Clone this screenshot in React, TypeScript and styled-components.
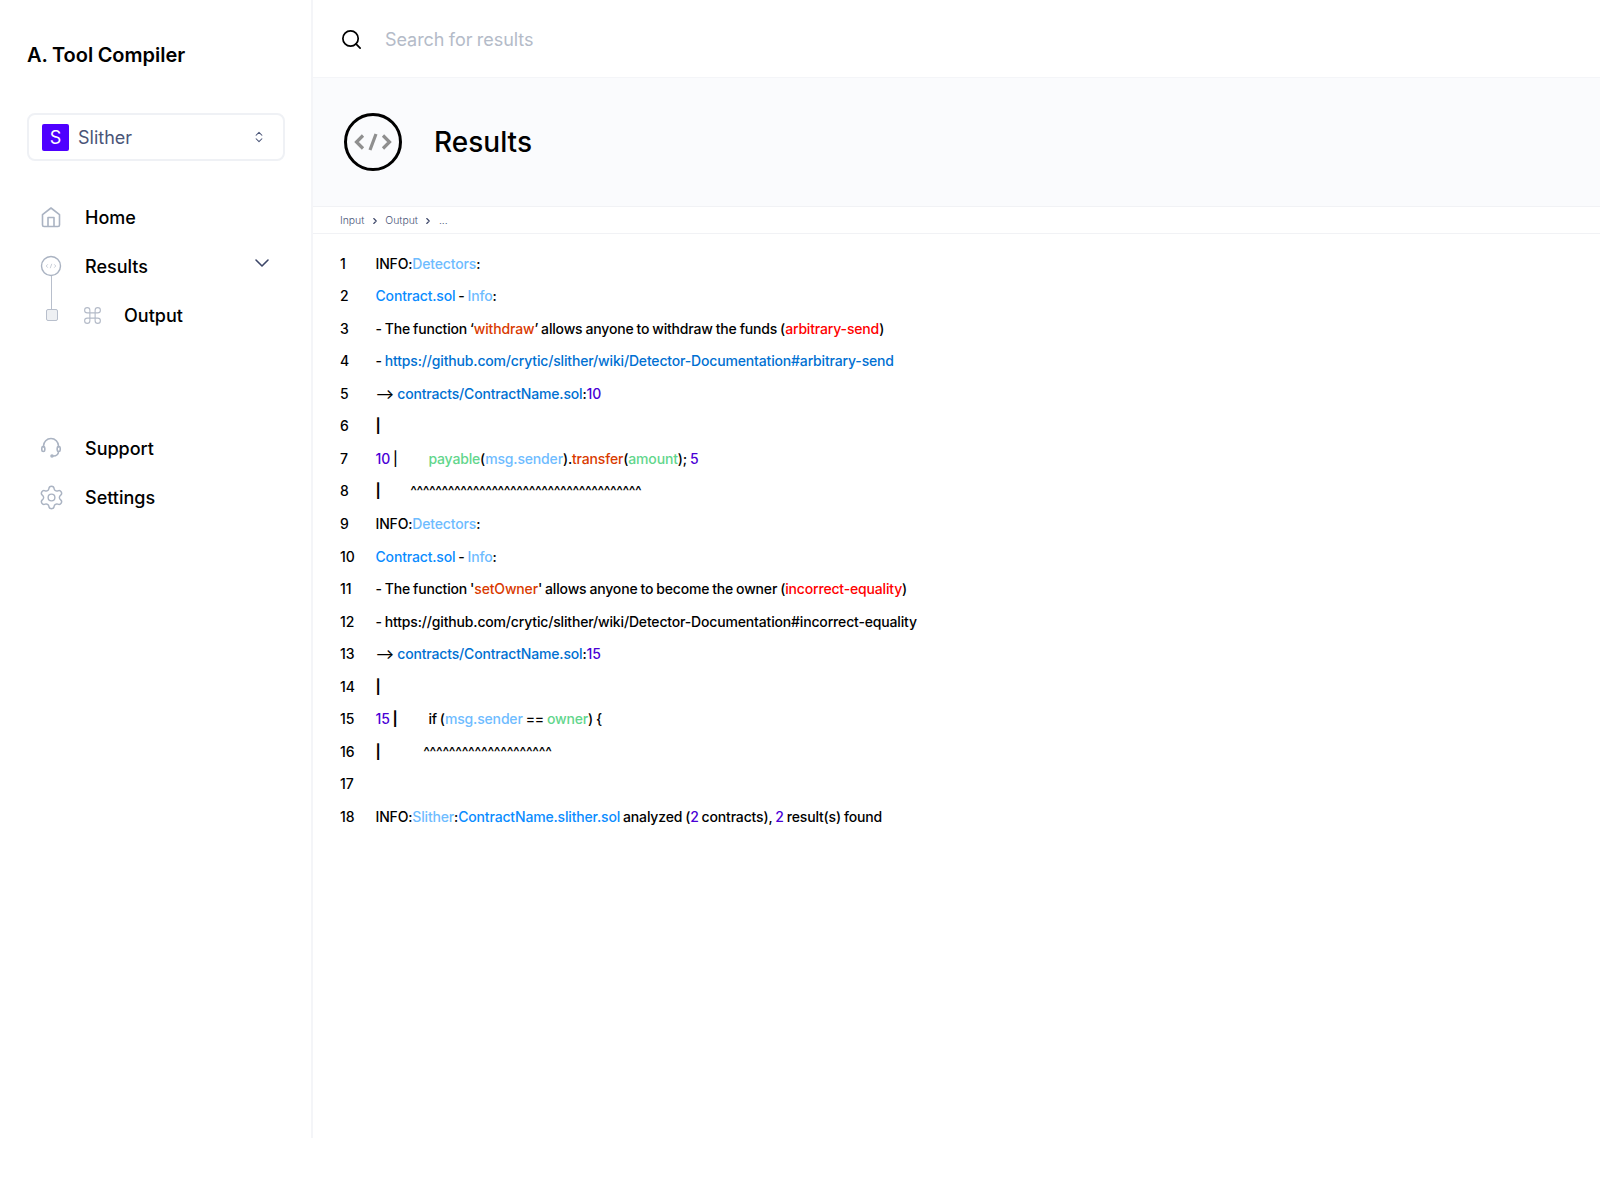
import React from "react";
import styled, { createGlobalStyle } from "styled-components";
import { ChevronDown, ChevronRight, ChevronsUpDown, Command, Search, Settings } from "lucide-react";

const BLACK = "#000000";
const SKY = "#6ebcff";
const BLUE = "#0a8cff";
const LINK = "#0070d2";
const RED = "#ff0000";
const ORANGE = "#d93a00";
const PURPLE = "#4a00d6";
const GREEN = "#62d68c";

type Token = [string, string?];

const CARETS_LONG = "^".repeat(37);
const CARETS_SHORT = "^".repeat(20);

const LINES: Token[][] = [
  [["INFO:"], ["Detectors", SKY], [":"]],
  [["Contract.sol", BLUE], [" - "], ["Info", SKY], [":"]],
  [["- The function ‘"], ["withdraw", ORANGE], ["’ allows anyone to withdraw the funds ("], ["arbitrary-send", RED], [")"]],
  [["- "], ["https://github.com/crytic/slither/wiki/Detector-Documentation#arbitrary-send", LINK]],
  [["-->"], [" "], ["contracts/ContractName.sol", LINK], [":"], ["10", PURPLE]],
  [["|"]],
  [["10 ", PURPLE], ["|          \u200a"], ["payable", GREEN], ["("], ["msg.sender", SKY], [")."], ["transfer", ORANGE], ["("], ["amount", GREEN], ["); "], ["5", PURPLE]],
  [["|"], ["          "], [CARETS_LONG]],
  [["INFO:"], ["Detectors", SKY], [":"]],
  [["Contract.sol", BLUE], [" - "], ["Info", SKY], [":"]],
  [["- The function '"], ["setOwner", ORANGE], ["' allows anyone to become the owner ("], ["incorrect-equality", RED], [")"]],
  [["- https://github.com/crytic/slither/wiki/Detector-Documentation#incorrect-equality"]],
  [["-->"], [" "], ["contracts/ContractName.sol", LINK], [":"], ["15", PURPLE]],
  [["|"]],
  [["15 ", PURPLE], ["|"], ["          \u200a"], ["if ("], ["msg.sender", SKY], [" == "], ["owner", GREEN], [") {"]],
  [["|"], ["              \u200a"], [CARETS_SHORT]],
  [],
  [["INFO:"], ["Slither", SKY], [":"], ["ContractName.slither.sol", BLUE], [" analyzed ("], ["2", PURPLE], [" contracts), "], ["2", PURPLE], [" result(s) found"]],
];

const HomeIcon = () => (
  <svg width="22" height="22" viewBox="0 0 22 22" fill="none" stroke="#aab3c2" strokeWidth="1.6" strokeLinejoin="round">
    <path d="M2.500 8.600 11 2l8.500 6.600V19a1.500 1.500 0 0 1-1.500 1.500H4A1.500 1.500 0 0 1 2.500 19z" />
    <path d="M8 20.500V11.500h6v9" />
  </svg>
);

const HeadsetIcon = () => (
  <svg width="22" height="22" viewBox="0 0 22 22" fill="none" stroke="#aab3c2" strokeWidth="1.6" strokeLinecap="round">
    <path d="M3.500 10V9a7.500 7.500 0 0 1 15 0v1" />
    <rect x="1.800" y="9.500" width="3" height="5" rx="1.500" />
    <rect x="17.200" y="9.500" width="3" height="5" rx="1.500" />
    <path d="M18.500 14.500c0 2.500-2 4.500-5 4.500" />
    <circle cx="12" cy="19" r="1" />
  </svg>
);

const SmallCodeIcon = () => (
  <svg width="22" height="22" viewBox="0 0 22 22" fill="none">
    <circle cx="11" cy="11" r="9.500" fill="#fff" stroke="#aab3c2" strokeWidth="1.400" />
    <path d="M7.800 9.300 6.200 11l1.600 1.700M14.200 9.300l1.600 1.700-1.600 1.700M11.800 8.800l-1.600 4.400" stroke="#c3c9d4" strokeWidth=".9" />
  </svg>
);

const ResultsIcon = () => (
  <svg width="60" height="60" viewBox="0 0 60 60" fill="none">
    <circle cx="30" cy="30" r="27.500" stroke="#000" strokeWidth="3" />
    <path d="M20 23.500 13.500 30l6.500 6.500M40 23.500 46.500 30 40 36.500M33 22l-6 16" stroke="#8f8f8f" strokeWidth="3.200" />
  </svg>
);

const renderToken = ([text, color]: Token, key: number) => {
  if (text === "-->") return <Arrow key={key}>{text}</Arrow>;
  if (text === "|") return <Bar key={key}>{text}</Bar>;
  if (text === CARETS_LONG) return <Carets key={key} $tracking={-0.43}>{text}</Carets>;
  if (text === CARETS_SHORT) return <Carets key={key} $tracking={-0.25}>{text}</Carets>;
  return <Tok key={key} $color={color ?? BLACK}>{text}</Tok>;
};

const App = () => {
  return (
    <Page>
      <GlobalStyle />
      <Sidebar>
        <Brand>A. Tool Compiler</Brand>
        <Picker>
          <PickerBadge>S</PickerBadge>
          <PickerName>Slither</PickerName>
          <ChevronsUpDown size={14} color="#4a5578" strokeWidth={1.8} />
        </Picker>
        <Nav>
          <NavItem>
            <NavIcon><HomeIcon /></NavIcon>
            <NavLabel>Home</NavLabel>
          </NavItem>
          <NavItem>
            <NavIcon $connector><SmallCodeIcon /></NavIcon>
            <NavLabel>Results</NavLabel>
            <NavChevron><ChevronDown size={24} color="#3c4668" strokeWidth={1.6} /></NavChevron>
          </NavItem>
          <NavItem>
            <NavIcon><SubMarker /></NavIcon>
            <SubIcon><Command size={21} color="#b4bbc8" strokeWidth={1.3} /></SubIcon>
            <NavLabel>Output</NavLabel>
          </NavItem>
        </Nav>
        <FooterNav>
          <NavItem>
            <NavIcon><HeadsetIcon /></NavIcon>
            <NavLabel>Support</NavLabel>
          </NavItem>
          <NavItem>
            <NavIcon><Settings size={27} color="#aab3c2" strokeWidth={1.25} /></NavIcon>
            <NavLabel>Settings</NavLabel>
          </NavItem>
        </FooterNav>
      </Sidebar>
      <Main>
        <SearchBar>
          <Search size={23} color="#000" strokeWidth={1.8} />
          <SearchText>Search for results</SearchText>
        </SearchBar>
        <Hero>
          <ResultsIcon />
          <HeroTitle>Results</HeroTitle>
        </Hero>
        <Crumbs>
          <span>Input</span>
          <ChevronRight size={10} color="#3c4668" strokeWidth={2.6} />
          <span>Output</span>
          <ChevronRight size={10} color="#3c4668" strokeWidth={2.6} />
          <span>...</span>
        </Crumbs>
        <Code>
          {LINES.map((tokens, i) => (
            <CodeLine key={i}>
              <LineNo>{i + 1}</LineNo>
              <LineText>{tokens.map(renderToken)}</LineText>
            </CodeLine>
          ))}
        </Code>
      </Main>
    </Page>
  );
};

//*STYLES
const GlobalStyle = createGlobalStyle`
  html, body {
    margin: 0;
    padding: 0;
    background: #ffffff;
    font-family: Inter, "Liberation Sans", sans-serif;
  }
`;

const Page = styled.div`
  display: flex;
  align-items: flex-start;
  width: 1600px;
  height: 1200px;
  overflow: hidden;
`;

const Sidebar = styled.aside`
  box-sizing: border-box;
  flex: 0 0 313px;
  height: 1138px;
  padding: 43px 26px 0 27px;
  border-right: 2px solid #f4f5f8;
  display: flex;
  flex-direction: column;
`;

const Brand = styled.div`
  font-size: 20px;
  line-height: 24px;
  font-weight: 600;
  word-spacing: -0.6px;
  color: #000;
`;

const Picker = styled.div`
  box-sizing: border-box;
  margin-top: 46px;
  height: 48px;
  padding: 0 17px 0 13px;
  display: flex;
  align-items: center;
  border: 2px solid #eff1f5;
  border-radius: 8px;
`;

const PickerBadge = styled.div`
  width: 27px;
  height: 27px;
  border-radius: 2px;
  background: #4f00ff;
  color: #fff;
  font-size: 18px;
  display: flex;
  align-items: center;
  justify-content: center;
`;

const PickerName = styled.div`
  flex: 1;
  margin-left: 9px;
  font-size: 18px;
  color: #4a5578;
`;

const Nav = styled.nav`
  margin-top: 41px;
  display: flex;
  flex-direction: column;
  gap: 19px;
`;

const FooterNav = styled(Nav)`
  margin-top: 103px;
`;

const NavItem = styled.div`
  display: flex;
  align-items: center;
  height: 30px;
  position: relative;
`;

const NavIcon = styled.div<{ $connector?: boolean }>`
  position: relative;
  margin-left: 13px;
  width: 22px;
  height: 22px;
  margin-right: 23px;
  display: flex;
  align-items: center;
  justify-content: center;
  svg {
    flex-shrink: 0;
  }
  ${(p) =>
    p.$connector &&
    `
    &::after {
      content: "";
      position: absolute;
      left: 10.5px;
      top: 21px;
      width: 1px;
      height: 36px;
      background: #b8bfcc;
    }
  `}
`;

const SubMarker = styled.div`
  box-sizing: border-box;
  width: 12px;
  height: 12px;
  margin-left: 1px;
  border-radius: 2px;
  background: #eef0f3;
  border: 1px solid #b8bfcc;
`;

const SubIcon = styled.div`
  width: 21px;
  height: 21px;
  margin-left: -3px;
  margin-right: 21px;
`;

const NavLabel = styled.div`
  font-size: 18px;
  font-weight: 450;
  color: #000;
`;

const NavChevron = styled.div`
  margin-left: auto;
  margin-top: -6px;
  margin-right: 11px;
  height: 24px;
`;

const Main = styled.main`
  flex: 1;
  min-width: 0;
`;

const SearchBar = styled.div`
  box-sizing: border-box;
  height: 78px;
  padding: 1px 29px 0 27px;
  display: flex;
  align-items: center;
  gap: 22px;
  border-bottom: 1px solid #f4f5f8;
`;

const SearchText = styled.div`
  font-size: 18px;
  letter-spacing: -0.05px;
  word-spacing: -0.6px;
  color: #b4bbc8;
`;

const Hero = styled.div`
  box-sizing: border-box;
  height: 129px;
  padding: 0 0 1px 30px;
  display: flex;
  align-items: center;
  gap: 31px;
  background: #fafbfd;
  border-bottom: 1px solid #f1f2f5;
`;

const HeroTitle = styled.h1`
  margin: 0;
  font-size: 28px;
  font-weight: 450;
  color: #000;
`;

const Crumbs = styled.div`
  box-sizing: border-box;
  height: 27px;
  padding: 1px 0 0 27px;
  display: flex;
  align-items: center;
  gap: 5.500px;
  font-size: 10.4px;
  font-weight: 300;
  color: #4a5578;
  border-bottom: 1px solid #f1f2f5;
`;

const Code = styled.div`
  padding: 13.6px 0 0 27px;
`;

const CodeLine = styled.div`
  display: flex;
  height: 32.56px;
  line-height: 32.56px;
  font-size: 14px;
  font-weight: 500;
  letter-spacing: -0.165px;
  word-spacing: -0.6px;
  color: #000;
`;

const LineNo = styled.div`
  flex: 0 0 35.5px;
`;

const LineText = styled.div`
  white-space: pre;
`;

const Tok = styled.span<{ $color: string }>`
  color: ${(p) => p.$color};
`;

const Arrow = styled.span`
  letter-spacing: 0;
`;

const Bar = styled.span`
  font-weight: 700;
`;

const Carets = styled.span<{ $tracking: number }>`
  letter-spacing: ${(p) => p.$tracking}px;
`;

export default App;
